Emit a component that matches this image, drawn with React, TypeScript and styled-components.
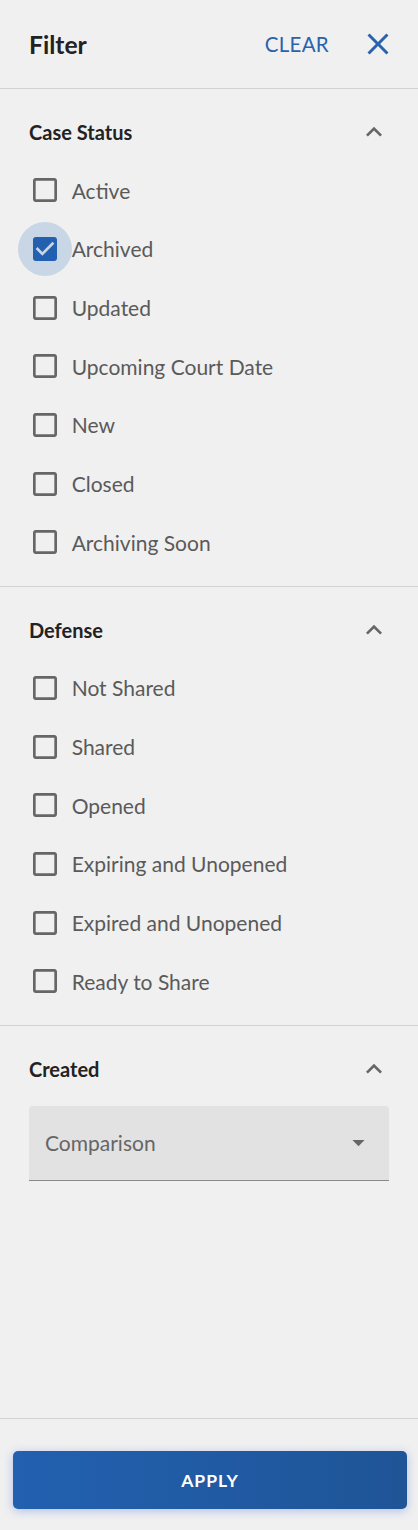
import styled, { createGlobalStyle } from "styled-components";

const GlobalStyle = createGlobalStyle`
  html, body {
    margin: 0;
    padding: 0;
    background: #f0f0f0;
  }
  * {
    box-sizing: border-box;
  }
`;

const Panel = styled.div`
  font-family: Lato, "Open Sans", sans-serif;
  background: #f0f0f0;
  width: 418px;
  min-height: 1530px;
  display: flex;
  flex-direction: column;
`;

const Header = styled.div`
  height: 89px;
  display: flex;
  align-items: center;
  padding: 0 22px 0 29px;
  border-bottom: 1px solid #d2d2d2;
`;

const Title = styled.h1`
  margin: 0;
  flex: 1;
  font-size: 24.7px;
  font-weight: 700;
  color: #222;
`;

const ClearButton = styled.button`
  border: none;
  background: none;
  padding: 0;
  margin-right: 31px;
  font-family: inherit;
  font-size: 20.5px;
  color: #2a63ad;
  letter-spacing: 0.3px;
`;

const IconButton = styled.button`
  border: none;
  background: none;
  padding: 0;
  display: flex;
  color: #2a63ad;
`;

const Body = styled.div`
  flex: 1;
`;

const Section = styled.section<{ $last?: boolean }>`
  padding: 14px 0;
  border-bottom: ${(p) => (p.$last ? "none" : "1px solid #d2d2d2")};
`;

const SectionHead = styled.div`
  height: 58px;
  display: flex;
  align-items: center;
  justify-content: space-between;
  padding: 0 28px 0 29px;
`;

const SectionTitle = styled.h2`
  margin: 0;
  font-size: 20px;
  font-weight: 700;
  color: #222;
`;

const Row = styled.label`
  height: 58.67px;
  display: flex;
  align-items: center;
  padding-left: 17.7px;
`;

const CheckWrap = styled.span<{ $checked: boolean }>`
  width: 54px;
  height: 54px;
  border-radius: 50%;
  display: flex;
  align-items: center;
  justify-content: center;
  background: ${(p) => (p.$checked ? "#c9d6e6" : "transparent")};
  color: ${(p) => (p.$checked ? "#2360b0" : "#666")};
`;

const Label = styled.span`
  font-size: 21px;
  color: #5a5a5a;
`;

const Select = styled.div`
  margin: 8px 29px 0;
  height: 75px;
  background: #e2e2e2;
  border-radius: 4px 4px 0 0;
  border-bottom: 1px solid #8a8a8a;
  display: flex;
  align-items: center;
  justify-content: space-between;
  padding: 0 16px 0 16px;
  font-size: 21px;
  color: #666;
`;

const Footer = styled.div`
  border-top: 1px solid #d2d2d2;
  padding: 32px 11px 21px 13px;
`;

const ApplyButton = styled.button`
  width: 100%;
  height: 58px;
  border: none;
  border-radius: 5px;
  background: linear-gradient(90deg, #2260b0 0%, #1f5597 100%);
  box-shadow: 0 2px 10px rgba(60, 100, 220, 0.35);
  color: #fff;
  font-family: inherit;
  font-size: 17.5px;
  font-weight: 700;
  letter-spacing: 1px;
`;

const ChevronUp = () => (
  <svg width="32" height="32" viewBox="0 0 24 24" fill="#666">
    <path d="M12 8l-6 6 1.41 1.41L12 10.83l4.59 4.58L18 14z" />
  </svg>
);

const CloseIcon = () => (
  <svg width="36" height="36" viewBox="0 0 24 24" fill="currentColor">
    <path d="M19 6.41 17.59 5 12 10.59 6.41 5 5 6.41 10.59 12 5 17.59 6.41 19 12 13.41 17.59 19 19 17.59 13.41 12z" />
  </svg>
);

const DropIcon = () => (
  <svg width="29" height="29" viewBox="0 0 24 24" fill="#666">
    <path d="M7 10l5 5 5-5z" />
  </svg>
);

const BoxIcon = ({ checked }: { checked: boolean }) => (
  <svg width="32" height="32" viewBox="0 0 24 24" fill="currentColor">
    {checked ? (
      <path d="M19 3H5c-1.11 0-2 .9-2 2v14c0 1.1.89 2 2 2h14c1.11 0 2-.9 2-2V5c0-1.1-.89-2-2-2zm-9 14l-5-5 1.41-1.41L10 14.17l7.59-7.59L19 8l-9 9z" />
    ) : (
      <path d="M19 5v14H5V5h14m0-2H5c-1.1 0-2 .9-2 2v14c0 1.1.9 2 2 2h14c1.1 0 2-.9 2-2V5c0-1.1-.9-2-2-2z" />
    )}
  </svg>
);

const caseStatus = [
  "Active",
  "Archived",
  "Updated",
  "Upcoming Court Date",
  "New",
  "Closed",
  "Archiving Soon",
];

const defense = [
  "Not Shared",
  "Shared",
  "Opened",
  "Expiring and Unopened",
  "Expired and Unopened",
  "Ready to Share",
];

const checked = ["Archived"];

function CheckList({ items }: { items: string[] }) {
  return (
    <>
      {items.map((item) => {
        const on = checked.includes(item);
        return (
          <Row key={item}>
            <CheckWrap $checked={on}>
              <BoxIcon checked={on} />
            </CheckWrap>
            <Label>{item}</Label>
          </Row>
        );
      })}
    </>
  );
}

export default function App() {
  return (
    <>
      <GlobalStyle />
      <Panel>
        <Header>
          <Title>Filter</Title>
          <ClearButton>CLEAR</ClearButton>
          <IconButton>
            <CloseIcon />
          </IconButton>
        </Header>
        <Body>
          <Section>
            <SectionHead>
              <SectionTitle>Case Status</SectionTitle>
              <ChevronUp />
            </SectionHead>
            <CheckList items={caseStatus} />
          </Section>
          <Section>
            <SectionHead>
              <SectionTitle>Defense</SectionTitle>
              <ChevronUp />
            </SectionHead>
            <CheckList items={defense} />
          </Section>
          <Section $last>
            <SectionHead>
              <SectionTitle>Created</SectionTitle>
              <ChevronUp />
            </SectionHead>
            <Select>
              <span>Comparison</span>
              <DropIcon />
            </Select>
          </Section>
        </Body>
        <Footer>
          <ApplyButton>APPLY</ApplyButton>
        </Footer>
      </Panel>
    </>
  );
}
